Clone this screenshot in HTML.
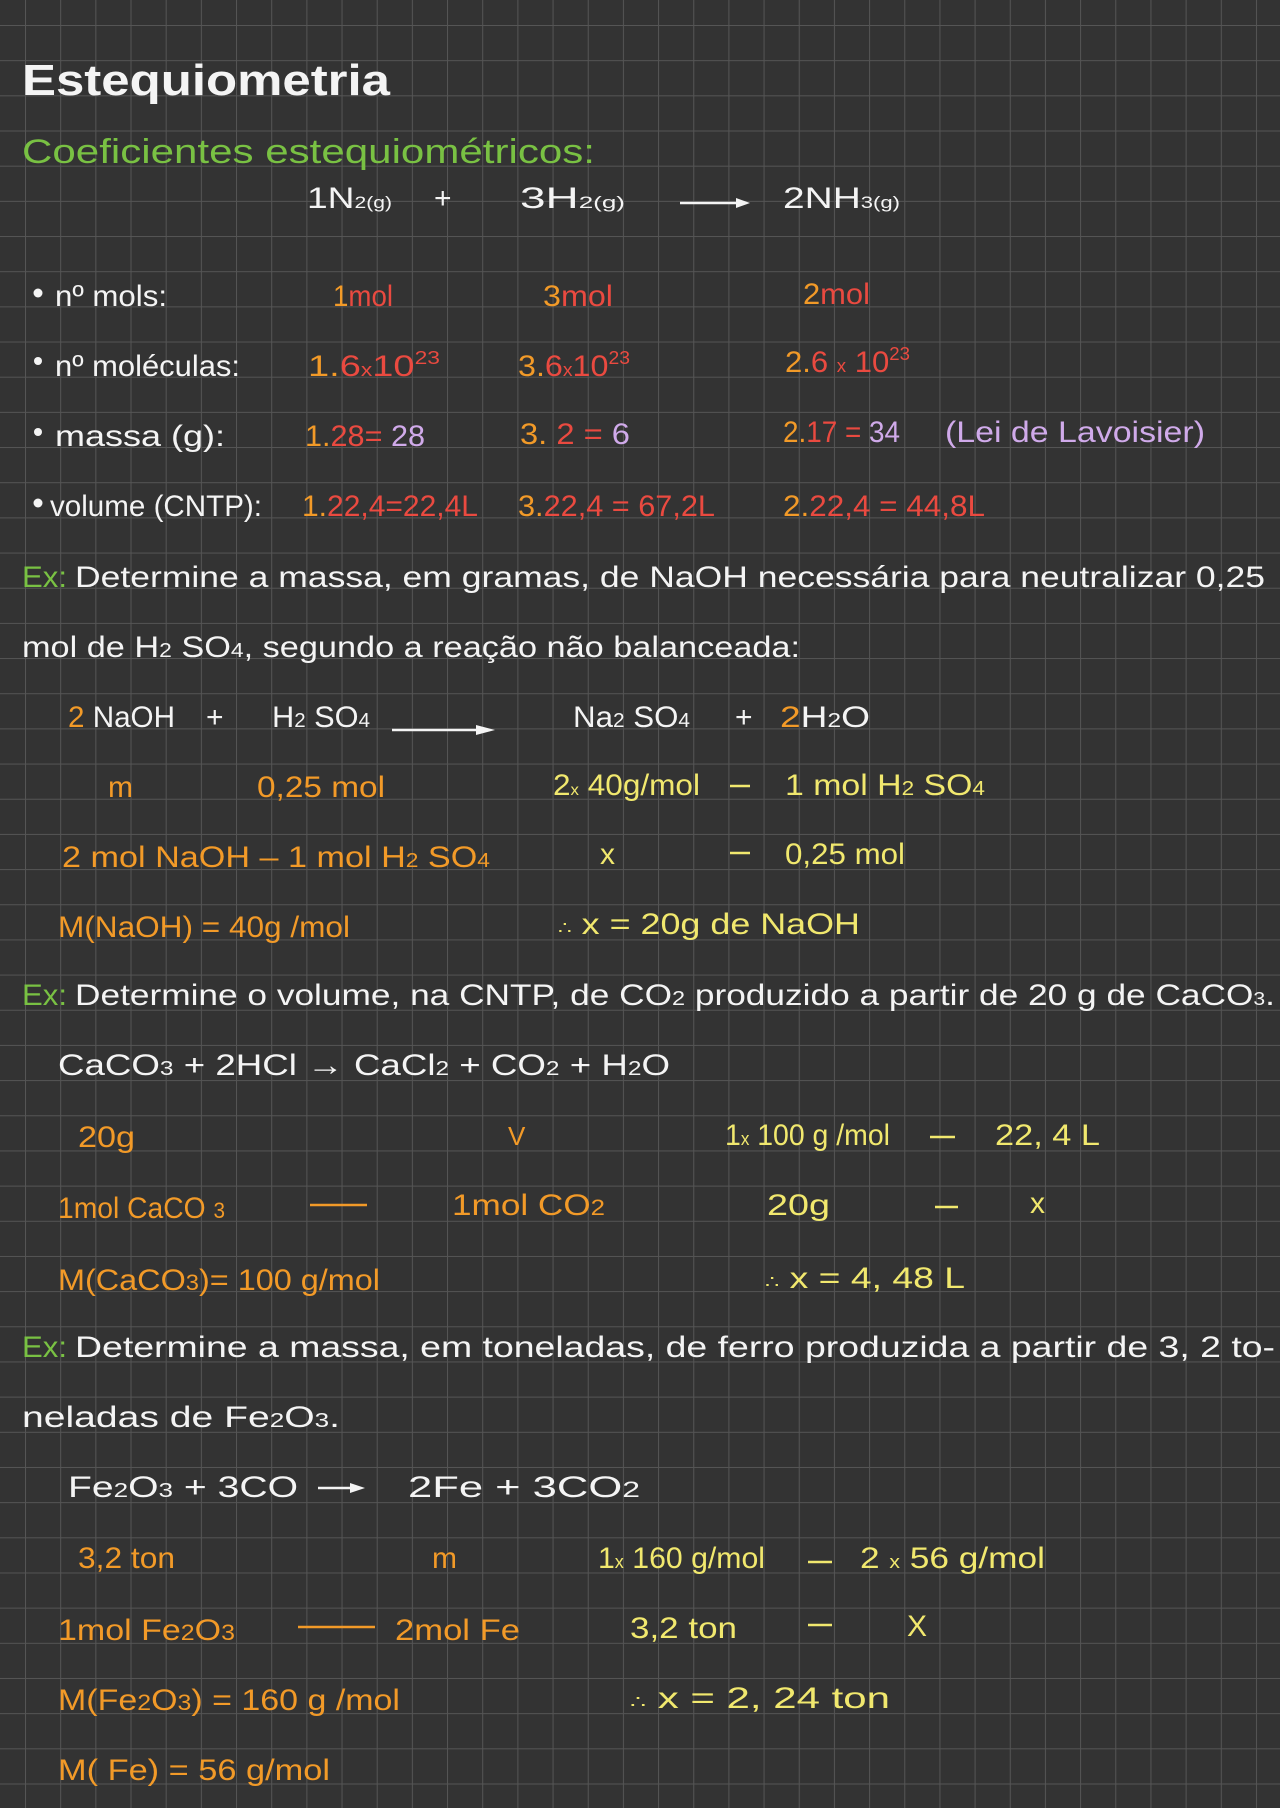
<!DOCTYPE html>
<html><head><meta charset="utf-8"><style>
html,body{margin:0;padding:0;background:#333;}
svg{display:block}
text{font-family:"Liberation Sans",sans-serif;font-size:30px;}
.w{fill:#f4f4f4}.g{fill:#79c143}.r{fill:#ea4a40}.o{fill:#f29a28}.l{fill:#d0aaea}.y{fill:#f1e86e}
</style></head><body>
<svg width="1280" height="1808" viewBox="0 0 1280 1808" xmlns="http://www.w3.org/2000/svg">
<defs><pattern id="grid" x="25" y="25" width="35.17" height="35.17" patternUnits="userSpaceOnUse">
<path d="M0 0H35.17M0 0V35.17" stroke="#555" stroke-width="2" fill="none"/></pattern></defs>
<rect width="1280" height="1808" fill="#333"/>
<rect width="1280" height="1808" fill="url(#grid)"/>

<text x="22" y="95" class="w" style="font-size:44px;font-weight:bold" textLength="368" lengthAdjust="spacingAndGlyphs">Estequiometria</text>
<text x="22" y="163" class="g" style="font-size:34px" textLength="573" lengthAdjust="spacingAndGlyphs">Coeficientes  estequiométricos:</text>

<g style="font-size:26px" class="w">
<text x="307" y="208" textLength="85" lengthAdjust="spacingAndGlyphs">1N<tspan style="font-size:17px">2(g)</tspan></text>
<text x="434" y="208">+</text>
<text x="520" y="208" textLength="105" lengthAdjust="spacingAndGlyphs">3H<tspan style="font-size:17px">2(g)</tspan></text>
<text x="783" y="208" textLength="117" lengthAdjust="spacingAndGlyphs">2NH<tspan style="font-size:17px">3(g)</tspan></text>
</g>
<path d="M680 203H738" stroke="#f4f4f4" stroke-width="2.5"/><path d="M736 198L750 203L736 208Z" fill="#f4f4f4"/>

<g class="w"><circle cx="38" cy="293" r="4.5" fill="#f4f4f4"/><circle cx="38" cy="361" r="4" fill="#f4f4f4"/><circle cx="38" cy="432" r="4" fill="#f4f4f4"/><circle cx="38" cy="503" r="4.5" fill="#f4f4f4"/>
<text x="55" y="306" textLength="112" lengthAdjust="spacingAndGlyphs">nº mols:</text>
<text x="55" y="376" textLength="185" lengthAdjust="spacingAndGlyphs">nº moléculas:</text>
<text x="55" y="446" textLength="170" lengthAdjust="spacingAndGlyphs">massa (g):</text>
<text x="50" y="516" textLength="212" lengthAdjust="spacingAndGlyphs">volume (CNTP):</text></g>

<text x="333" y="306" class="r" textLength="60" lengthAdjust="spacingAndGlyphs"><tspan class="o">1</tspan>mol</text>
<text x="543" y="306" class="r" textLength="70" lengthAdjust="spacingAndGlyphs"><tspan class="o">3</tspan>mol</text>
<text x="803" y="304" class="r" textLength="67" lengthAdjust="spacingAndGlyphs"><tspan class="o">2</tspan>mol</text>

<text x="308" y="376" class="r" textLength="132" lengthAdjust="spacingAndGlyphs"><tspan class="o">1.</tspan>6<tspan style="font-size:18px">x</tspan>10<tspan dy="-12" style="font-size:18px">23</tspan></text>
<text x="518" y="376" class="r" textLength="112" lengthAdjust="spacingAndGlyphs"><tspan class="o">3.</tspan>6<tspan style="font-size:18px">x</tspan>10<tspan dy="-12" style="font-size:18px">23</tspan></text>
<text x="785" y="372" class="r" textLength="125" lengthAdjust="spacingAndGlyphs"><tspan class="o">2.</tspan>6 <tspan style="font-size:18px">x</tspan> 10<tspan dy="-12" style="font-size:18px">23</tspan></text>

<text x="305" y="446" class="r" textLength="120" lengthAdjust="spacingAndGlyphs"><tspan class="o">1.</tspan>28= <tspan class="l">28</tspan></text>
<text x="520" y="444" class="r" textLength="110" lengthAdjust="spacingAndGlyphs"><tspan class="o">3.</tspan> 2 = <tspan class="l">6</tspan></text>
<text x="783" y="442" class="r" textLength="117" lengthAdjust="spacingAndGlyphs"><tspan class="o">2.</tspan>17 = <tspan class="l">34</tspan></text>
<text x="945" y="442" class="l" textLength="260" lengthAdjust="spacingAndGlyphs">(Lei de Lavoisier)</text>

<text x="302" y="516" class="r" textLength="176" lengthAdjust="spacingAndGlyphs"><tspan class="o">1.</tspan>22,4=22,4L</text>
<text x="518" y="516" class="r" textLength="197" lengthAdjust="spacingAndGlyphs"><tspan class="o">3.</tspan>22,4 = 67,2L</text>
<text x="783" y="516" class="r" textLength="202" lengthAdjust="spacingAndGlyphs"><tspan class="o">2.</tspan>22,4 = 44,8L</text>

<text x="22" y="587" class="g" textLength="45" lengthAdjust="spacingAndGlyphs">Ex:</text>
<text x="75" y="587" class="w" textLength="1190" lengthAdjust="spacingAndGlyphs">Determine  a  massa, em gramas, de  NaOH  necessária  para  neutralizar  0,25</text>
<text x="22" y="657" class="w" textLength="778" lengthAdjust="spacingAndGlyphs">mol  de  H<tspan style="font-size:20px">2</tspan> SO<tspan style="font-size:20px">4</tspan>,  segundo  a  reação  não  balanceada:</text>

<text x="68" y="727" class="w" textLength="107" lengthAdjust="spacingAndGlyphs"><tspan class="o">2</tspan> NaOH</text>
<text x="206" y="727" class="w">+</text>
<text x="272" y="727" class="w" textLength="98" lengthAdjust="spacingAndGlyphs">H<tspan style="font-size:20px">2</tspan> SO<tspan style="font-size:20px">4</tspan></text>
<path d="M392 730H478" stroke="#f4f4f4" stroke-width="2.5"/><path d="M476 725L495 730L476 735Z" fill="#f4f4f4"/>
<text x="573" y="727" class="w" textLength="117" lengthAdjust="spacingAndGlyphs">Na<tspan style="font-size:20px">2</tspan> SO<tspan style="font-size:20px">4</tspan></text>
<text x="735" y="727" class="w">+</text>
<text x="780" y="727" class="w" textLength="90" lengthAdjust="spacingAndGlyphs"><tspan class="o">2</tspan>H<tspan style="font-size:20px">2</tspan>O</text>

<text x="108" y="797" class="o">m</text>
<text x="257" y="797" class="o" textLength="128" lengthAdjust="spacingAndGlyphs">0,25 mol</text>
<text x="553" y="795" class="y" textLength="147" lengthAdjust="spacingAndGlyphs">2<tspan style="font-size:16px">x</tspan> 40g/mol</text>
<path d="M730 786H750" stroke="#f1e86e" stroke-width="2.5"/>
<text x="785" y="795" class="y" textLength="200" lengthAdjust="spacingAndGlyphs">1 mol  H<tspan style="font-size:20px">2</tspan> SO<tspan style="font-size:20px">4</tspan></text>

<text x="62" y="867" class="o" textLength="428" lengthAdjust="spacingAndGlyphs">2 mol  NaOH  –  1 mol  H<tspan style="font-size:20px">2</tspan> SO<tspan style="font-size:20px">4</tspan></text>
<text x="600" y="864" class="y">x</text>
<path d="M730 853H750" stroke="#f1e86e" stroke-width="2.5"/>
<text x="785" y="864" class="y" textLength="120" lengthAdjust="spacingAndGlyphs">0,25 mol</text>

<text x="58" y="937" class="o" textLength="292" lengthAdjust="spacingAndGlyphs">M(NaOH) =  40g /mol</text>
<text x="558" y="934" class="y" textLength="302" lengthAdjust="spacingAndGlyphs"><tspan style="font-size:18px">∴</tspan> x =  20g de  NaOH</text>

<text x="22" y="1005" class="g" textLength="45" lengthAdjust="spacingAndGlyphs">Ex:</text>
<text x="75" y="1005" class="w" textLength="1200" lengthAdjust="spacingAndGlyphs">Determine o volume, na CNTP,  de  CO<tspan style="font-size:20px">2</tspan>  produzido  a  partir  de  20 g  de  CaCO<tspan style="font-size:18px">3</tspan>.</text>

<text x="58" y="1075" class="w" textLength="612" lengthAdjust="spacingAndGlyphs">CaCO<tspan style="font-size:20px">3</tspan> + 2HCl  →  CaCl<tspan style="font-size:20px">2</tspan>  +  CO<tspan style="font-size:20px">2</tspan>  +  H<tspan style="font-size:20px">2</tspan>O</text>

<text x="78" y="1147" class="o" textLength="57" lengthAdjust="spacingAndGlyphs">20g</text>
<text x="508" y="1145" class="o" style="font-size:26px">V</text>
<text x="725" y="1145" class="y" textLength="165" lengthAdjust="spacingAndGlyphs">1<tspan style="font-size:18px">x</tspan> 100 g /mol</text>
<path d="M930 1137H955" stroke="#f1e86e" stroke-width="2.5"/>
<text x="995" y="1145" class="y" textLength="105" lengthAdjust="spacingAndGlyphs">22, 4 L</text>

<text x="58" y="1218" class="o" textLength="167" lengthAdjust="spacingAndGlyphs">1mol CaCO <tspan style="font-size:22px">3</tspan></text>
<path d="M310 1205H367" stroke="#f29a28" stroke-width="2.5"/>
<text x="452" y="1215" class="o" textLength="153" lengthAdjust="spacingAndGlyphs">1mol  CO<tspan style="font-size:22px">2</tspan></text>
<text x="767" y="1215" class="y" textLength="63" lengthAdjust="spacingAndGlyphs">20g</text>
<path d="M935 1207H958" stroke="#f1e86e" stroke-width="2.5"/>
<text x="1030" y="1213" class="y">x</text>

<text x="58" y="1290" class="o" textLength="322" lengthAdjust="spacingAndGlyphs">M(CaCO<tspan style="font-size:22px">3</tspan>)= 100 g/mol</text>
<text x="765" y="1288" class="y" textLength="200" lengthAdjust="spacingAndGlyphs"><tspan style="font-size:18px">∴</tspan> x  =  4, 48 L</text>

<text x="22" y="1357" class="g" textLength="45" lengthAdjust="spacingAndGlyphs">Ex:</text>
<text x="75" y="1357" class="w" textLength="1200" lengthAdjust="spacingAndGlyphs">Determine  a  massa, em toneladas, de  ferro  produzida  a  partir  de  3, 2  to-</text>
<text x="22" y="1427" class="w" textLength="318" lengthAdjust="spacingAndGlyphs">neladas  de  Fe<tspan style="font-size:20px">2</tspan>O<tspan style="font-size:20px">3</tspan>.</text>

<text x="68" y="1497" class="w" textLength="230" lengthAdjust="spacingAndGlyphs">Fe<tspan style="font-size:20px">2</tspan>O<tspan style="font-size:20px">3</tspan> + 3CO</text>
<path d="M318 1488H352" stroke="#f4f4f4" stroke-width="2.5"/><path d="M350 1483L365 1488L350 1493Z" fill="#f4f4f4"/>
<text x="408" y="1497" class="w" textLength="232" lengthAdjust="spacingAndGlyphs">2Fe  +  3CO<tspan style="font-size:22px">2</tspan></text>

<text x="78" y="1568" class="o" textLength="97" lengthAdjust="spacingAndGlyphs">3,2 ton</text>
<text x="432" y="1568" class="o">m</text>
<text x="598" y="1568" class="y" textLength="167" lengthAdjust="spacingAndGlyphs">1<tspan style="font-size:18px">x</tspan> 160 g/mol</text>
<path d="M808 1562H832" stroke="#f1e86e" stroke-width="2.5"/>
<text x="860" y="1568" class="y" textLength="185" lengthAdjust="spacingAndGlyphs">2 <tspan style="font-size:18px">x</tspan> 56 g/mol</text>

<text x="58" y="1640" class="o" textLength="177" lengthAdjust="spacingAndGlyphs">1mol Fe<tspan style="font-size:22px">2</tspan>O<tspan style="font-size:22px">3</tspan></text>
<path d="M298 1627H375" stroke="#f29a28" stroke-width="2.5"/>
<text x="395" y="1640" class="o" textLength="125" lengthAdjust="spacingAndGlyphs">2mol Fe</text>
<text x="630" y="1638" class="y" textLength="107" lengthAdjust="spacingAndGlyphs">3,2 ton</text>
<path d="M808 1625H832" stroke="#f1e86e" stroke-width="2.5"/>
<text x="907" y="1636" class="y">X</text>

<text x="58" y="1710" class="o" textLength="342" lengthAdjust="spacingAndGlyphs">M(Fe<tspan style="font-size:22px">2</tspan>O<tspan style="font-size:22px">3</tspan>) =  160 g /mol</text>
<text x="630" y="1708" class="y" textLength="260" lengthAdjust="spacingAndGlyphs"><tspan style="font-size:18px">∴</tspan>  x = 2, 24 ton</text>

<text x="58" y="1780" class="o" textLength="272" lengthAdjust="spacingAndGlyphs">M( Fe)  =  56 g/mol</text>
</svg>
</body></html>
